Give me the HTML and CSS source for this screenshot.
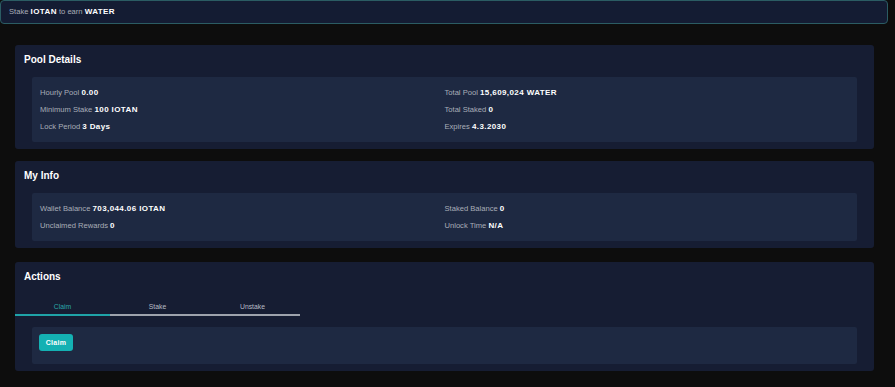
FILE: index.html
```html
<!DOCTYPE html>
<html>
<head>
<meta charset="utf-8">
<link rel="stylesheet" href="styles.css">
</head>
<body>
<div class="banner">Stake <b>IOTAN</b> to earn <b>WATER</b></div>
<main class="cards">
  <section class="card">
    <h2 class="card-title">Pool Details</h2>
    <div class="panel grid">
      <div class="col">
        <div class="row">Hourly Pool <b>0.00</b></div>
        <div class="row">Minimum Stake <b>100 IOTAN</b></div>
        <div class="row">Lock Period <b>3 Days</b></div>
      </div>
      <div class="col">
        <div class="row">Total Pool <b>15,609,024 WATER</b></div>
        <div class="row">Total Staked <b>0</b></div>
        <div class="row">Expires <b>4.3.2030</b></div>
      </div>
    </div>
  </section>
  <section class="card">
    <h2 class="card-title">My Info</h2>
    <div class="panel grid">
      <div class="col">
        <div class="row">Wallet Balance <b>703,044.06 IOTAN</b></div>
        <div class="row">Unclaimed Rewards <b>0</b></div>
      </div>
      <div class="col">
        <div class="row">Staked Balance <b>0</b></div>
        <div class="row">Unlock Time <b>N/A</b></div>
      </div>
    </div>
  </section>
  <section class="card actions">
    <h2 class="card-title">Actions</h2>
    <div class="tabs">
      <div class="tab active">Claim</div>
      <div class="tab">Stake</div>
      <div class="tab">Unstake</div>
    </div>
    <div class="panel action-panel">
      <button class="btn">Claim</button>
    </div>
  </section>
</main>
</body>
</html>
```

FILE: styles.css
```css
* { box-sizing: border-box; }
html, body { margin: 0; padding: 0; }
body {
  background: #0d0d0d;
  font-family: "Liberation Sans", Arial, sans-serif;
  color: #a9aeb8;
  font-size: 7.6px;
  width: 895px;
  height: 387px;
  overflow: hidden;
}
b {
  color: #ffffff;
  font-weight: 700;
  font-size: 8px;
  letter-spacing: 0.4px;
}
.banner {
  height: 24px;
  line-height: 22px;
  margin-right: 7px;
  background: #141c33;
  border: 1px solid #2b5c63;
  border-radius: 4px;
  padding: 0 7px 0 8px;
  white-space: nowrap;
}
.cards {
  display: flex;
  flex-direction: column;
  gap: 12px;
  padding: 21px 21px 0 15px;
}
.card {
  background: #161d33;
  border-radius: 3px;
  padding: 8px 9px 7px;
}
.card-title {
  margin: 0 0 12px;
  height: 12px;
  line-height: 13px;
  font-size: 10px;
  font-weight: 700;
  color: #ffffff;
}
.panel {
  background: #1e2942;
  border-radius: 2px;
  margin: 0 8px;
}
.grid {
  display: grid;
  grid-template-columns: 1fr 1fr;
  padding: 7px 8px;
}
.row {
  height: 17px;
  line-height: 17px;
  white-space: nowrap;
}
.actions { margin-top: 2px; }
.actions .card-title { margin-bottom: 16px; }
.tabs {
  display: flex;
  margin-left: -9px;
  margin-bottom: 11px;
}
.tab {
  width: 95px;
  text-align: center;
  font-size: 6.8px;
  color: #b8bcc6;
  line-height: 9px;
  padding: 4px 0 3px;
  border-bottom: 2px solid #9ea3ad;
}
.tab.active {
  color: #2aa5ab;
  border-bottom-color: #1fa3a8;
}
.action-panel {
  padding: 7px 7px 13px;
  height: 37px;
}
.btn {
  display: block;
  height: 17px;
  width: 34px;
  padding: 0;
  border: none;
  border-radius: 3px;
  background: #14b1b3;
  color: #ffffff;
  font-family: "Liberation Sans", Arial, sans-serif;
  font-weight: 700;
  font-size: 7px;
  letter-spacing: 0.3px;
}
```
